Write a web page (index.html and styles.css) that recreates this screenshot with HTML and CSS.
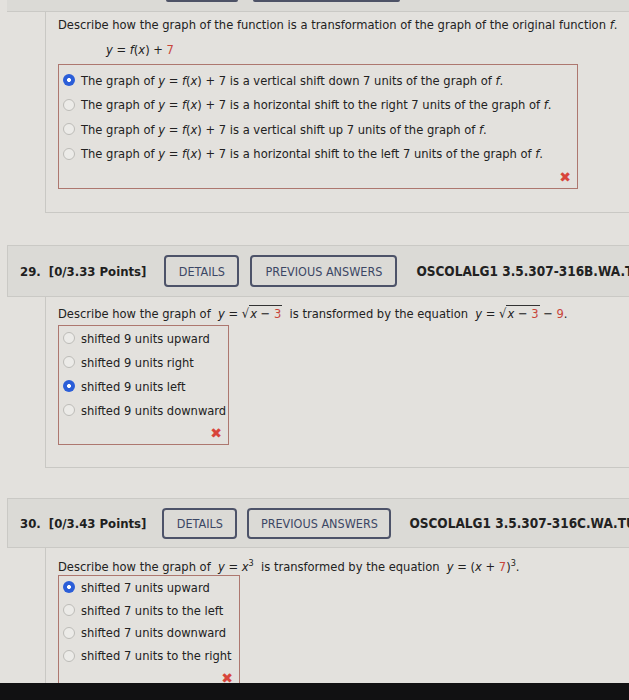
FILE: index.html
```html
<!DOCTYPE html>
<html>
<head>
<meta charset="utf-8">
<link rel="stylesheet" href="styles.css">
</head>
<body>
<div class="page">
  <div class="head-tail">
    <span class="tail-btn tail-a"></span>
    <span class="tail-btn tail-b"></span>
  </div>

  <section class="panel p28">
    <p class="q">Describe how the graph of the function is a transformation of the graph of the original function <i>f</i>.</p>
    <p class="formula"><i>y</i> = <i>f</i>(<i>x</i>) + <span class="red">7</span></p>
    <div class="answers a28">
      <div class="opt"><span class="radio on"></span><span class="txt">The graph of <i>y</i> = <i>f</i>(<i>x</i>) + 7 is a vertical shift down 7 units of the graph of <i>f</i>.</span></div>
      <div class="opt"><span class="radio"></span><span class="txt">The graph of <i>y</i> = <i>f</i>(<i>x</i>) + 7 is a horizontal shift to the right 7 units of the graph of <i>f</i>.</span></div>
      <div class="opt"><span class="radio"></span><span class="txt">The graph of <i>y</i> = <i>f</i>(<i>x</i>) + 7 is a vertical shift up 7 units of the graph of <i>f</i>.</span></div>
      <div class="opt"><span class="radio"></span><span class="txt">The graph of <i>y</i> = <i>f</i>(<i>x</i>) + 7 is a horizontal shift to the left 7 units of the graph of <i>f</i>.</span></div>
      <div class="mark">✖</div>
    </div>
  </section>

  <header class="head h29">
    <span class="qnum">29.&nbsp; [0/3.33 Points]</span>
    <span class="btn b-det">DETAILS</span>
    <span class="btn b-prev">PREVIOUS ANSWERS</span>
    <span class="code">OSCOLALG1 3.5.307-316B.WA.TUT.</span>
  </header>

  <section class="panel p29">
    <p class="q">Describe how the graph of &nbsp;<i>y</i> = <span class="sqrt">√<span class="rad"><i>x</i> − <span class="red">3</span></span></span>&nbsp; is transformed by the equation &nbsp;<i>y</i> = <span class="sqrt">√<span class="rad"><i>x</i> − <span class="red">3</span></span></span> − <span class="red">9</span>.</p>
    <div class="answers a29">
      <div class="opt"><span class="radio"></span><span class="txt">shifted 9 units upward</span></div>
      <div class="opt"><span class="radio"></span><span class="txt">shifted 9 units right</span></div>
      <div class="opt"><span class="radio on"></span><span class="txt">shifted 9 units left</span></div>
      <div class="opt"><span class="radio"></span><span class="txt">shifted 9 units downward</span></div>
      <div class="mark">✖</div>
    </div>
  </section>

  <header class="head h30">
    <span class="qnum">30.&nbsp; [0/3.43 Points]</span>
    <span class="btn b-det">DETAILS</span>
    <span class="btn b-prev">PREVIOUS ANSWERS</span>
    <span class="code">OSCOLALG1 3.5.307-316C.WA.TUT.</span>
  </header>

  <section class="panel p30">
    <p class="q">Describe how the graph of &nbsp;<i>y</i> = <i>x</i><sup>3</sup>&nbsp; is transformed by the equation &nbsp;<i>y</i> = (<i>x</i> + <span class="red">7</span>)<sup>3</sup>.</p>
    <div class="answers a30">
      <div class="opt"><span class="radio on"></span><span class="txt">shifted 7 units upward</span></div>
      <div class="opt"><span class="radio"></span><span class="txt">shifted 7 units to the left</span></div>
      <div class="opt"><span class="radio"></span><span class="txt">shifted 7 units downward</span></div>
      <div class="opt"><span class="radio"></span><span class="txt">shifted 7 units to the right</span></div>
      <div class="mark">✖</div>
    </div>
  </section>

  <footer class="bezel"></footer>
</div>
</body>
</html>
```

FILE: styles.css
```css
html, body {
  margin: 0;
  padding: 0;
}
body {
  background: #e3e1dd;
  color: #222222;
  font-family: "DejaVu Sans Condensed", "DejaVu Sans", sans-serif;
  font-stretch: condensed;
  font-size: 12.8px;
  overflow: hidden;
}
.page {
  width: 629px;
  height: 700px;
  overflow: hidden;
  display: flex;
  flex-direction: column;
}
p { margin: 0; }
i { font-style: italic; }
.red { color: #c8453a; }

.head-tail {
  height: 11px;
  margin-left: 7px;
  background: #dbdad6;
  border-bottom: 1px solid #cac9c5;
  display: flex;
  align-items: flex-start;
  flex-shrink: 0;
}
.tail-btn {
  height: 2px;
  background: #4d5266;
  border-radius: 0 0 3px 3px;
  flex-shrink: 0;
}
.tail-a { width: 72px; margin-left: 159px; }
.tail-b { width: 147px; margin-left: 15px; }

.panel {
  margin-left: 45px;
  border-left: 1px solid #c9c8c4;
  border-bottom: 1px solid #c9c8c4;
  padding-left: 12px;
  box-sizing: border-box;
  flex-shrink: 0;
  white-space: nowrap;
}
.p28 { height: 201px; padding-top: 5px; }
.p29 { height: 171px; padding-top: 9px; }
.p30 { height: 135px; padding-top: 11px; border-bottom: 0; }

.q { line-height: 16px; }
.p30 .q { line-height: 15px; }
.formula {
  margin-top: 9px;
  margin-left: 48px;
  line-height: 16px;
}

.answers {
  border: 1px solid #ad776f;
  box-sizing: border-box;
  padding-left: 4px;
}
.a28 { width: 520px; margin-top: 6px; padding-top: 3px; height: 125px; }
.a29 { width: 171px; margin-top: 3px; padding-top: 0; height: 120px; }
.a30 { width: 182px; margin-top: 1px; padding-top: 0; height: 130px; }

.opt {
  display: flex;
  align-items: center;
  gap: 6px;
  height: 24.5px;
}
.a29 .opt { height: 24px; }
.a30 .opt { height: 22.8px; }

.radio {
  width: 10px;
  height: 10px;
  border: 1px solid #bdbcb8;
  border-radius: 50%;
  background: #ecebe8;
  flex-shrink: 0;
}
.radio.on {
  width: 12px;
  height: 12px;
  border: 0;
  background: radial-gradient(circle, #ffffff 0 1.6px, #2b5ed8 2.3px);
}

.mark {
  text-align: right;
  color: #d8453b;
  font-size: 14px;
  line-height: 18px;
  padding-right: 6px;
  margin-top: 2px;
  font-family: "DejaVu Sans", sans-serif;
  font-stretch: normal;
}

.sqrt { white-space: nowrap; }
.rad {
  border-top: 1px solid #333;
  padding: 0 1px;
}
sup { font-size: 9px; line-height: 0; }

.head {
  height: 52px;
  margin-left: 7px;
  background: #dbdad6;
  border-top: 1px solid #cac9c5;
  border-bottom: 1px solid #cac9c5;
  border-left: 1px solid #cac9c5;
  box-sizing: border-box;
  display: flex;
  align-items: center;
  padding-left: 12px;
  white-space: nowrap;
  flex-shrink: 0;
}
.head > * { flex-shrink: 0; }
.h29 { margin-top: 32px; }
.h30 { margin-top: 30px; height: 50px; }

.qnum {
  font-weight: bold;
  font-size: 13px;
  color: #202020;
}
.btn {
  height: 32px;
  box-sizing: border-box;
  border: 2px solid #4d5369;
  border-radius: 4px;
  display: flex;
  align-items: center;
  justify-content: center;
  color: #3b4765;
  font-size: 12.5px;
}
.h30 .btn { height: 31px; }
.b-det { width: 75px; margin-left: 18px; }
.b-prev { width: 147px; margin-left: 11px; }
.h30 .b-det { margin-left: 16px; }
.h30 .b-prev { width: 144px; margin-left: 10px; }
.code {
  margin-left: 19px;
  font-weight: bold;
  font-size: 13.5px;
  color: #222222;
}
.h30 .code { margin-left: 18px; }

.bezel {
  height: 17px;
  background: #111112;
  flex-shrink: 0;
}
```
